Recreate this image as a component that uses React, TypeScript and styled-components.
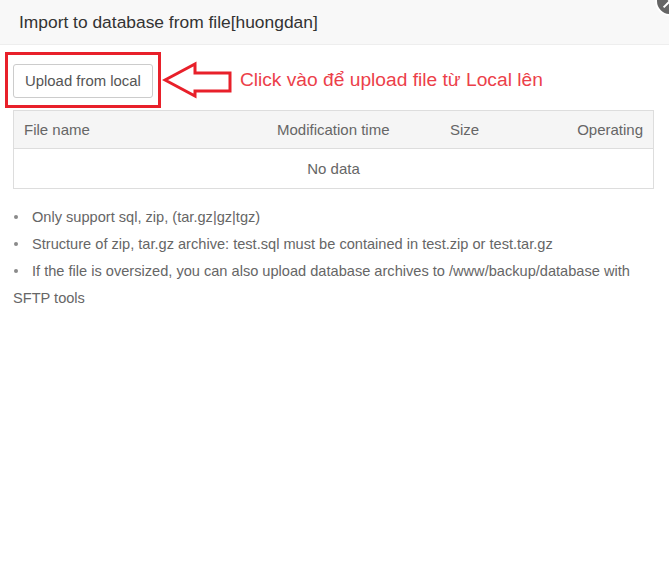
import React from 'react'
import styled, { createGlobalStyle } from 'styled-components'

const GlobalStyle = createGlobalStyle`
  html, body {
    margin: 0;
    padding: 0;
    background: #fff;
  }
  body {
    font-family: "Liberation Sans", Arial, sans-serif;
    font-size: 14px;
    color: #666;
  }
`

const Layer = styled.div`
  position: relative;
  width: 669px;
  height: 561px;
  overflow: hidden;
  background: #fff;
`

const Title = styled.div`
  height: 44px;
  line-height: 44px;
  padding-left: 19px;
  background: #f8f8f8;
  border-bottom: 1px solid #eee;
  font-size: 17.4px;
  color: #333;
`

const CloseBtn = styled.span`
  position: absolute;
  top: -14px;
  right: -16px;
  width: 26px;
  height: 26px;
  border-radius: 50%;
  background: #656565;
  border: 2px solid #fff;

  &::before,
  &::after {
    content: '';
    position: absolute;
    left: 4px;
    top: 12px;
    width: 18px;
    height: 2px;
    background: #fff;
    transform: rotate(45deg);
  }
  &::after {
    transform: rotate(-45deg);
  }
`

const Content = styled.div`
  padding: 6px 15px 0 13px;
`

const Toolbar = styled.div`
  display: flex;
  align-items: center;
  height: 58px;
  margin-bottom: 1px;
`

const Highlight = styled.div`
  margin-left: -8px;
  padding: 9px 5px 7px 5px;
  border: 3px solid #e8202a;
`

const Button = styled.button`
  height: 34px;
  padding: 0 11px;
  background: #fff;
  border: 1px solid #ccc;
  border-radius: 3px;
  font-family: inherit;
  font-size: 14.9px;
  color: #555;
  cursor: pointer;
`

const Arrow = styled.svg`
  margin-left: 1px;
  flex: none;
`

const Note = styled.span`
  margin-left: 6px;
  font-size: 19.2px;
  color: #ec3f4a;
`

const Table = styled.table`
  width: 641px;
  border-collapse: collapse;
  border: 1px solid #ddd;
  font-size: 15px;
`

const HeadCell = styled.th<{ $align?: string }>`
  height: 37px;
  padding: 0 10px;
  background: #f5f5f5;
  border-bottom: 1px solid #ddd;
  font-weight: normal;
  text-align: ${p => p.$align || 'left'};
  color: #666;
`

const EmptyCell = styled.td`
  height: 37px;
  text-align: center;
  color: #666;
`

const Tips = styled.ul`
  margin: 15px 0 0;
  padding: 0;
  list-style: none;
  line-height: 27px;
  font-size: 14.6px;
  color: #666;
`

const Tip = styled.li`
  &::before {
    content: '';
    display: inline-block;
    width: 4px;
    height: 4px;
    margin: 0 14px 3px 1px;
    border-radius: 50%;
    background: #8a8a8a;
    vertical-align: middle;
  }
`

export default function App() {
  return (
    <>
      <GlobalStyle />
      <Layer>
        <Title>Import to database from file[huongdan]</Title>
        <CloseBtn />
        <Content>
          <Toolbar>
            <Highlight>
              <Button>Upload from local</Button>
            </Highlight>
            <Arrow width="72" height="40" viewBox="0 0 72 40">
              <polygon
                points="3,20 33,4 33,13 68,13 68,31 33,31 33,36"
                fill="#fff"
                stroke="#e8202a"
                strokeWidth="3"
                strokeLinejoin="miter"
              />
            </Arrow>
            <Note>Click vào để upload file từ Local lên</Note>
          </Toolbar>
          <Table>
            <thead>
              <tr>
                <HeadCell style={{ width: 233 }}>File name</HeadCell>
                <HeadCell style={{ width: 153 }}>Modification time</HeadCell>
                <HeadCell>Size</HeadCell>
                <HeadCell $align="right">Operating</HeadCell>
              </tr>
            </thead>
            <tbody>
              <tr>
                <EmptyCell colSpan={4}>No data</EmptyCell>
              </tr>
            </tbody>
          </Table>
          <Tips>
            <Tip>Only support sql, zip, (tar.gz|gz|tgz)</Tip>
            <Tip>Structure of zip, tar.gz archive: test.sql must be contained in test.zip or test.tar.gz</Tip>
            <Tip>If the file is oversized, you can also upload database archives to /www/backup/database with SFTP tools</Tip>
          </Tips>
        </Content>
      </Layer>
    </>
  )
}
